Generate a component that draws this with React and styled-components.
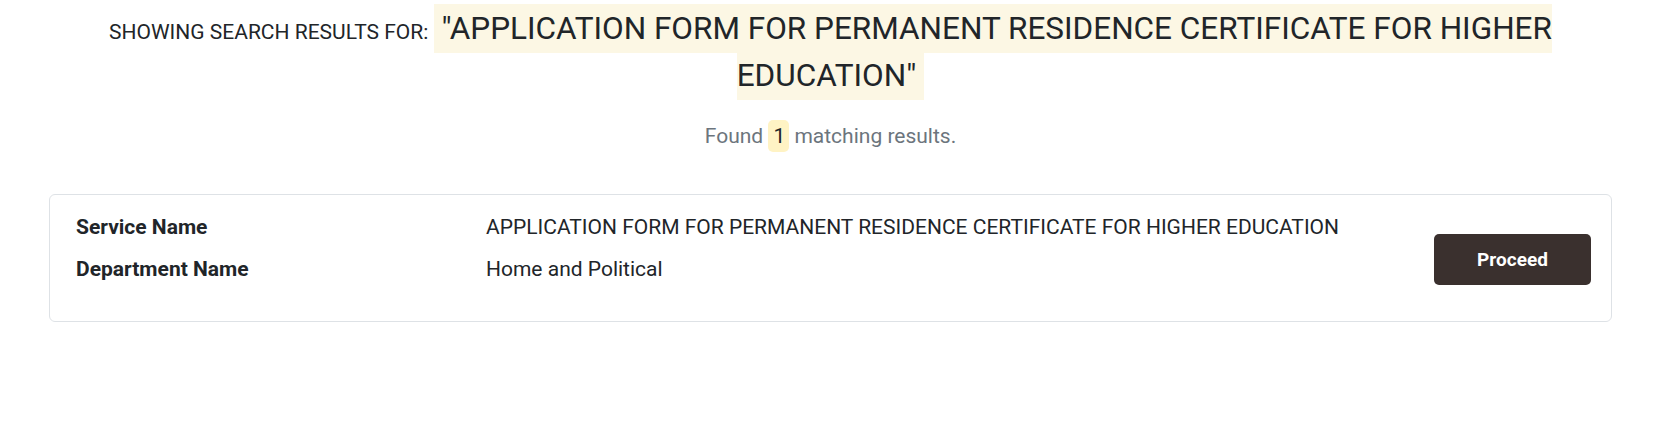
import React from "react";
import styled, { createGlobalStyle } from "styled-components";

const GlobalStyle = createGlobalStyle`
  body {
    margin: 0;
    background: #fff;
    font-family: Roboto, "Liberation Sans", Arial, sans-serif;
    color: #212529;
  }
`;

const Page = styled.div`
  padding: 5px 57px 0 49px;
`;

const Heading = styled.h2`
  margin: 0;
  font-size: 21px;
  font-weight: 400;
  line-height: 31.5px;
  text-align: center;
  color: #212529;
`;

const Query = styled.mark`
  font-size: 31.5px;
  line-height: 47px;
  padding: 0.2em 8px;
  background: #fcf7e4;
  color: #212529;
`;

const Summary = styled.p`
  margin: 22px 0 0;
  font-size: 21px;
  line-height: 31.5px;
  text-align: center;
  color: #6c757d;
`;

const Count = styled.mark`
  padding: 4px 4px 4px 5px;
  border-radius: 5px;
  background: #fff3c4;
  color: #212529;
`;

const Card = styled.div`
  margin-top: 41px;
  display: flex;
  align-items: center;
  border: 1px solid #dee2e6;
  border-radius: 6px;
  padding: 17px 20px 16px 26px;
`;

const Info = styled.div`
  flex: 1;
  display: flex;
  flex-direction: column;
  gap: 11px;
  padding-bottom: 19px;
`;

const Row = styled.div`
  display: grid;
  grid-template-columns: 410px 1fr;
  font-size: 21px;
  line-height: 31.5px;
`;

const Label = styled.span`
  font-weight: 700;
  color: #212529;
`;

const Value = styled.span`
  color: #212529;
`;

const ProceedButton = styled.button`
  width: 157px;
  height: 51px;
  margin-top: 2px;
  border: none;
  border-radius: 5px;
  background: #3a302e;
  color: #fff;
  font-family: Roboto, "Liberation Sans", Arial, sans-serif;
  font-size: 19px;
  font-weight: 700;
  cursor: pointer;
`;

const result = {
  service:
    "APPLICATION FORM FOR PERMANENT RESIDENCE CERTIFICATE FOR HIGHER EDUCATION",
  department: "Home and Political",
};

export default function App() {
  return (
    <>
      <GlobalStyle />
      <Page>
        <Heading>
          SHOWING SEARCH RESULTS FOR:{" "}
          <Query>"{result.service}"</Query>
        </Heading>
        <Summary>
          Found <Count>1</Count> matching results.
        </Summary>
        <Card>
          <Info>
            <Row>
              <Label>Service Name</Label>
              <Value>{result.service}</Value>
            </Row>
            <Row>
              <Label>Department Name</Label>
              <Value>{result.department}</Value>
            </Row>
          </Info>
          <ProceedButton>Proceed</ProceedButton>
        </Card>
      </Page>
    </>
  );
}
